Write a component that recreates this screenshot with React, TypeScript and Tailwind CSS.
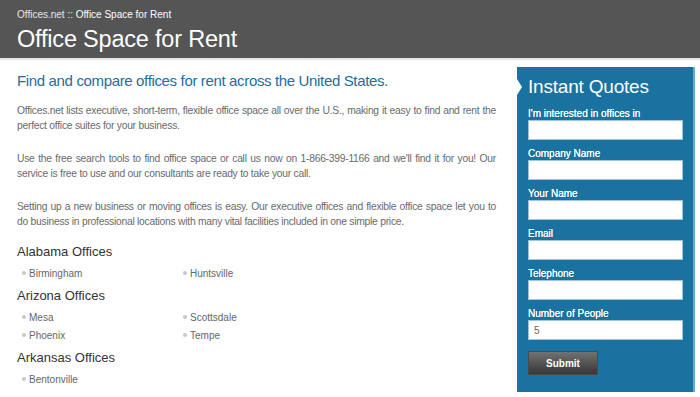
import React from 'react';

const states = [
  { name: 'Alabama Offices', cities: ['Birmingham', 'Huntsville'] },
  { name: 'Arizona Offices', cities: ['Mesa', 'Scottsdale', 'Phoenix', 'Tempe'] },
  { name: 'Arkansas Offices', cities: ['Bentonville'] },
];

const fields = [
  { label: "I'm interested in offices in", value: '' },
  { label: 'Company Name', value: '' },
  { label: 'Your Name', value: '' },
  { label: 'Email', value: '' },
  { label: 'Telephone', value: '' },
  { label: 'Number of People', value: '5' },
];

export default function App() {
  return (
    <div className="w-[700px] h-[397px] overflow-hidden bg-white font-['Liberation_Sans',Arial,sans-serif]">
      {/* Header */}
      <header className="h-[60px] bg-[#555555] border-b-2 border-[#e4e4e4] pl-[17px] pt-[8px]">
        <div className="text-[10px] leading-[14px] text-[#e6e6e6]">
          Offices.net :: <span className="text-white">Office Space for Rent</span>
        </div>
        <h1 className="text-[23.5px] leading-[28px] text-white mt-[3px] tracking-[-0.2px]">Office Space for Rent</h1>
      </header>

      <div className="flex pl-[17px] pt-[7px]">
        {/* Main */}
        <main className="w-[479px] shrink-0">
          <h2 className="text-[15px] leading-[20px] text-[#1a6fa0] mt-[4px] tracking-[-0.35px]">
            Find and compare offices for rent across the United States.
          </h2>
          <div className="text-[10.3px] leading-[15px] tracking-[-0.25px] text-[#6a6a6a] text-justify mt-[12px] space-y-[18px]">
            <p>
              Offices.net lists executive, short-term, flexible office space all over the U.S., making it easy to find and rent the perfect office suites for your business.
            </p>
            <p>
              Use the free search tools to find office space or call us now on 1-866-399-1166 and we'll find it for you! Our service is free to use and our consultants are ready to take your call.
            </p>
            <p>
              Setting up a new business or moving offices is easy. Our executive offices and flexible office space let you to do business in professional locations with many vital facilities included in one simple price.
            </p>
          </div>

          <div className="mt-[13px]">
            {states.map((s) => (
              <section key={s.name}>
                <h3 className="text-[13px] leading-[20px] text-[#333333] mt-[4px]">{s.name}</h3>
                <ul className="grid grid-cols-2 w-[322px] mt-[2px]">
                  {s.cities.map((c) => (
                    <li key={c} className="flex items-center h-[18px] pl-[5px] text-[10px] text-[#666666]">
                      <span className="w-[4px] h-[4px] rounded-full bg-[#c8c8c8] mr-[3px]" />
                      {c}
                    </li>
                  ))}
                </ul>
              </section>
            ))}
          </div>
        </main>

        {/* Quote panel */}
        <aside className="relative ml-[21px] w-[178px] h-[325px] bg-[#19729f] border-r-2 border-[#62a9d4] pl-[11px] pr-[10px]">
          <span className="absolute left-0 top-[12px] w-0 h-0 border-y-[8px] border-y-transparent border-l-[5px] border-l-white" />
          <h2 className="text-[19px] leading-[24px] text-white pt-[8px] tracking-[-0.2px]">Instant Quotes</h2>
          <form className="mt-[1px]">
            {fields.map((f) => (
              <div key={f.label}>
                <label className="block h-[20px] pt-[8px] text-[10px] leading-[11px] text-white [text-shadow:0_0_0.3px_white]">
                  {f.label}
                </label>
                <input
                  readOnly
                  value={f.value}
                  className="block w-[155px] h-[20px] bg-white border border-[#9cc4dc] px-[5px] text-[10px] text-[#666666] outline-none"
                />
              </div>
            ))}
            <button
              type="button"
              className="mt-[11px] w-[70px] h-[24px] bg-gradient-to-b from-[#727272] to-[#383838] border border-[#4a4a4a] text-white text-[10px] font-bold"
            >
              Submit
            </button>
          </form>
        </aside>
      </div>
    </div>
  );
}
